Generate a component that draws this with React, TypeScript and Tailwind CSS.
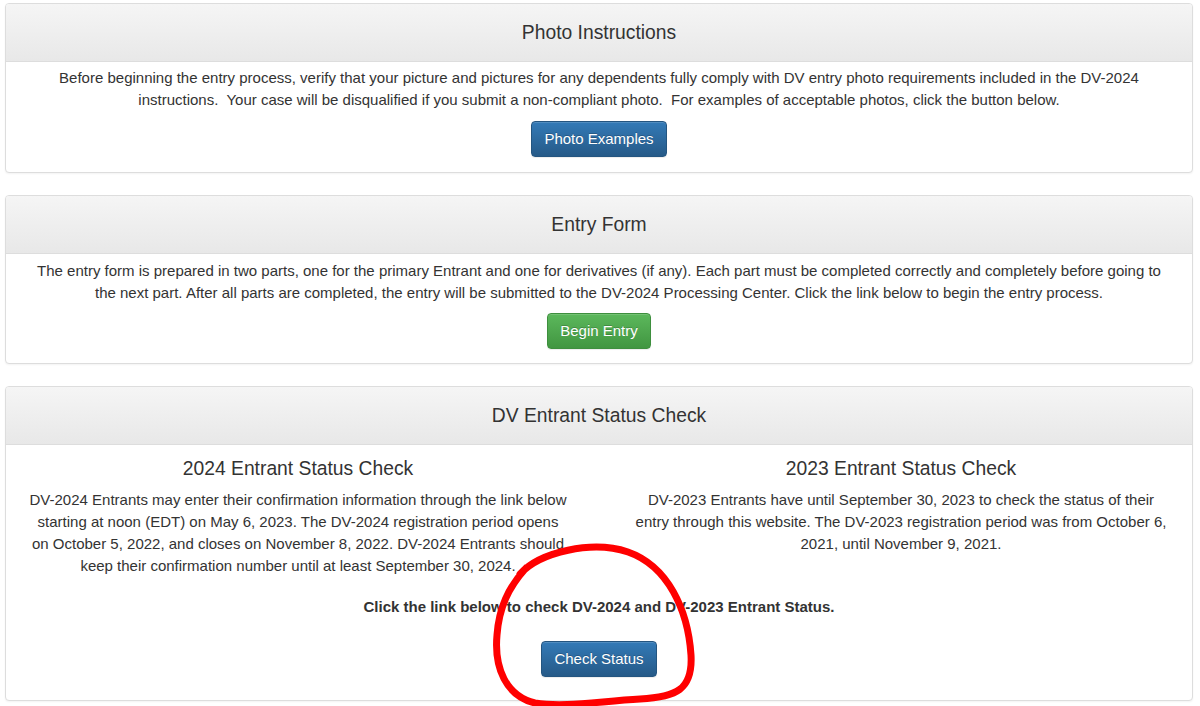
import React from 'react';

const font = { fontFamily: '"Liberation Sans", Arial, sans-serif' };

const photoText =
  'Before beginning the entry process, verify that your picture and pictures for any dependents fully comply with DV entry photo requirements included in the DV-2024 instructions.\u00a0 Your case will be disqualified if you submit a non-compliant photo.\u00a0 For examples of acceptable photos, click the button below.';

const Panel: React.FC<{ title: string; className?: string; children: React.ReactNode }> = ({ title, className, children }) => (
  <div className={`mx-[5px] w-[1188px] rounded-[4px] border border-[#dddddd] bg-white shadow-[0_1px_2px_rgba(0,0,0,0.05)] ${className ?? ''}`}>
    <div className="flex h-[58px] items-center justify-center rounded-t-[3px] border-b border-[#dddddd] bg-gradient-to-b from-[#f5f5f5] to-[#e8e8e8]">
      <h3 className="text-[19.3px] leading-[22px] text-[#333333]">{title}</h3>
    </div>
    {children}
  </div>
);

const BlueButton: React.FC<{ label: string }> = ({ label }) => (
  <button className="rounded-[4px] border border-[#245580] bg-gradient-to-b from-[#337ab7] to-[#265a88] px-[12px] py-[6px] text-[15px] leading-[22px] text-white shadow-[inset_0_1px_0_rgba(255,255,255,0.15),0_1px_1px_rgba(0,0,0,0.075)] [text-shadow:0_-1px_0_rgba(0,0,0,0.2)]">
    {label}
  </button>
);

export default function App() {
  return (
    <div className="relative min-h-[706px] w-[1200px] overflow-hidden bg-white pt-[3px] text-[#333333]" style={font}>
      {/* Photo Instructions */}
      <Panel title="Photo Instructions">
        <div className="px-[25px] pt-[5px] pb-[15px] text-center">
          <p className="text-[15px] leading-[22px]">{photoText}</p>
          <div className="mt-[10px]">
            <BlueButton label="Photo Examples" />
          </div>
        </div>
      </Panel>

      {/* Entry Form */}
      <Panel title="Entry Form" className="mt-[22px]">
        <div className="px-[25px] pt-[6px] pb-[14px] text-center">
          <p className="text-[15px] leading-[22px]">
            The entry form is prepared in two parts, one for the primary Entrant and one for derivatives (if any). Each part must be completed correctly and completely before going to the next part. After all parts are completed, the entry will be submitted to the DV-2024 Processing Center. Click the link below to begin the entry process.
          </p>
          <div className="mt-[9px]">
            <button className="rounded-[4px] border border-[#3e8f3e] bg-gradient-to-b from-[#5cb85c] to-[#419641] px-[12px] py-[6px] text-[15px] leading-[22px] text-white shadow-[inset_0_1px_0_rgba(255,255,255,0.15),0_1px_1px_rgba(0,0,0,0.075)] [text-shadow:0_-1px_0_rgba(0,0,0,0.2)]">
              Begin Entry
            </button>
          </div>
        </div>
      </Panel>

      {/* Status check */}
      <Panel title="DV Entrant Status Check" className="mt-[22px]">
        <div className="pt-[10px] pb-[23px] text-center">
          <div className="grid grid-cols-[538px_538px] gap-x-[65px] pl-[23px] pr-[22px]">
            <div>
              <h4 className="text-[19.3px] leading-[28px]">2024 Entrant Status Check</h4>
              <p className="mt-[6px] text-[15px] leading-[22px]">
                DV-2024 Entrants may enter their confirmation information through the link below starting at noon (EDT) on May 6, 2023. The DV-2024 registration period opens on October 5, 2022, and closes on November 8, 2022. DV-2024 Entrants should keep their confirmation number until at least September 30, 2024.
              </p>
            </div>
            <div>
              <h4 className="text-[19.3px] leading-[28px]">2023 Entrant Status Check</h4>
              <p className="mt-[6px] text-[15px] leading-[22px]">
                DV-2023 Entrants have until September 30, 2023 to check the status of their entry through this website. The DV-2023 registration period was from October 6, 2021, until November 9, 2021.
              </p>
            </div>
          </div>
          <p className="mt-[19px] text-[15px] font-bold leading-[22px]">
            Click the link below to check DV-2024 and DV-2023 Entrant Status.
          </p>
          <div className="mt-[23px]">
            <BlueButton label="Check Status" />
          </div>
        </div>
      </Panel>

      {/* hand-drawn red annotation */}
      <svg className="pointer-events-none absolute left-0 top-0" width="1200" height="706" viewBox="0 0 1200 706">
        <path
          d="M 520 574 C 540 552, 592 540, 628 552 C 668 566, 688 610, 691 655 C 693 690, 676 697, 640 699 C 600 701, 565 708, 535 703 C 506 696, 494 668, 497 635 C 499 608, 508 588, 526 568"
          fill="none"
          stroke="#ff0000"
          strokeWidth="7"
          strokeLinecap="round"
          strokeLinejoin="round"
        />
      </svg>
    </div>
  );
}
